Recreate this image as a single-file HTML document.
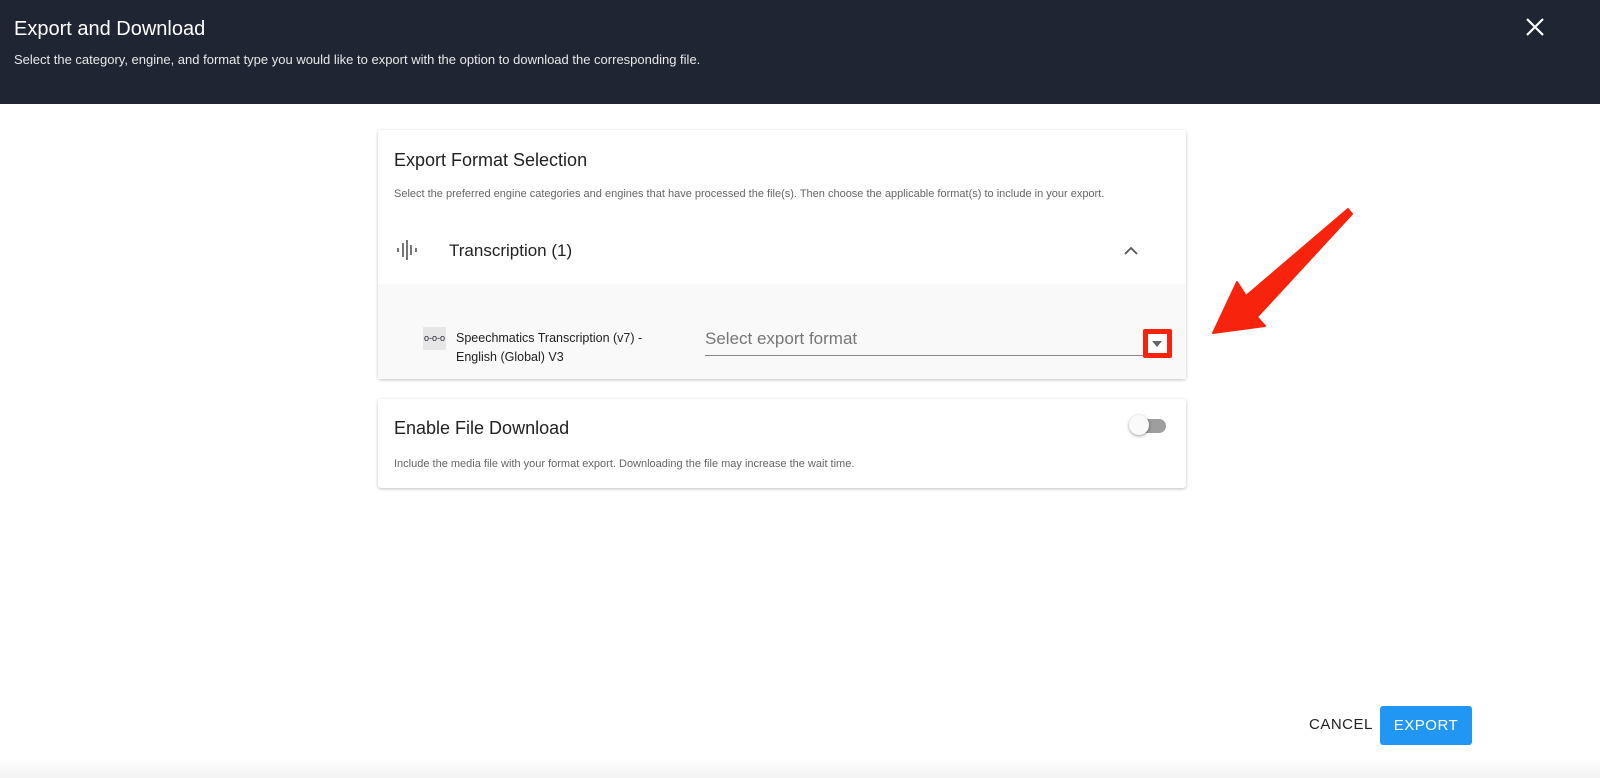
<!DOCTYPE html>
<html><head><style>
body{margin:0;width:1600px;height:778px;background:#fff;font-family:"Liberation Sans",sans-serif;position:relative;overflow:hidden}
.hdr{position:absolute;left:0;top:0;width:1600px;height:104px;background:#1f2532;color:#fff}
.hdr h1{position:absolute;left:14px;top:18px;margin:0;font-size:20px;font-weight:normal}
.hdr p{position:absolute;left:14px;top:52px;margin:0;font-size:13px;color:#e8e8e8}
.x{position:absolute;left:1524px;top:16px}
.card{position:absolute;left:378px;width:808px;background:#fff;box-shadow:0 1px 3px rgba(0,0,0,.25);border-radius:3px}
.t{position:absolute;font-size:18px;color:#222}
.s{position:absolute;font-size:11px;color:#666}
</style></head><body>
<div class="hdr"><h1>Export and Download</h1><p>Select the category, engine, and format type you would like to export with the option to download the corresponding file.</p>
<svg class="x" width="22" height="22" viewBox="0 0 22 22"><path d="M3 3L19 19M19 3L3 19" stroke="#fff" stroke-width="2.2"/></svg></div>
<div class="card" style="top:130px;height:249px">
<div class="t" style="left:16px;top:20px">Export Format Selection</div>
<div class="s" style="left:16px;top:58px">Select the preferred engine categories and engines that have processed the file(s). Then choose the applicable format(s) to include in your export.</div>
<svg style="position:absolute;left:18px;top:110px" width="22" height="20"><g stroke="#555" stroke-width="1.6"><path d="M2 8v4M7 3v14M11 0v20M15 5v10M20 8v4"/></g></svg>
<div class="t" style="left:71px;top:111px;font-size:17px">Transcription (1)</div>
<svg style="position:absolute;left:746px;top:116px" width="14" height="10"><path d="M1 8L7 2L13 8" fill="none" stroke="#555" stroke-width="1.8"/></svg>
<div style="position:absolute;left:0;top:154px;width:808px;height:95px;background:#f9f9f9"></div>
<div style="position:absolute;left:45px;top:197px;width:23px;height:23px;background:#e6e6e6;font-size:9px;line-height:23px;text-align:center;color:#223">o-o-o</div>
<div style="position:absolute;left:78px;top:199px;font-size:12.5px;color:#222;line-height:19px">Speechmatics Transcription (v7) -<br>English (Global) V3</div>
<div style="position:absolute;left:327px;top:199px;font-size:17px;color:#777">Select export format</div>
<div style="position:absolute;left:327px;top:225px;width:440px;height:1px;background:#888"></div>
<div style="position:absolute;left:765px;top:199px;width:29px;height:29px;background:#f7230c;border-radius:2px"><div style="position:absolute;left:5px;top:5px;width:19px;height:19px;background:#fff"></div><div style="position:absolute;left:9px;top:12px;width:0;height:0;border-left:5.5px solid transparent;border-right:5.5px solid transparent;border-top:6px solid #666"></div></div>
</div>
<div class="card" style="top:399px;height:89px">
<div class="t" style="left:16px;top:19px">Enable File Download</div>
<div class="s" style="left:16px;top:59px">Include the media file with your format export. Downloading the file may increase the wait time.</div>
<div style="position:absolute;left:754px;top:20px;width:34px;height:14px;border-radius:7px;background:#9e9e9e"></div>
<div style="position:absolute;left:751px;top:16px;width:20px;height:20px;border-radius:50%;background:#fafafa;box-shadow:0 1px 3px rgba(0,0,0,.4)"></div>
</div>
<svg style="position:absolute;left:0;top:0" width="1600" height="778"><path d="M1348 209L1352 214L1257 317L1265 326L1213 333L1237 282L1246 296Z" fill="#f7230c" stroke="#f7230c" stroke-width="2" stroke-linejoin="round"/></svg>
<div style="position:absolute;left:1309px;top:716px;font-size:15px;color:#222;letter-spacing:.5px">CANCEL</div>
<div style="position:absolute;left:1380px;top:706px;width:92px;height:39px;background:#2196f3;border-radius:3px;color:#fff;font-size:15px;line-height:39px;text-align:center;letter-spacing:.5px">EXPORT</div>
<div style="position:absolute;left:0;top:758px;width:1600px;height:20px;background:linear-gradient(#fff,#f3f3f3)"></div>
</body></html>
